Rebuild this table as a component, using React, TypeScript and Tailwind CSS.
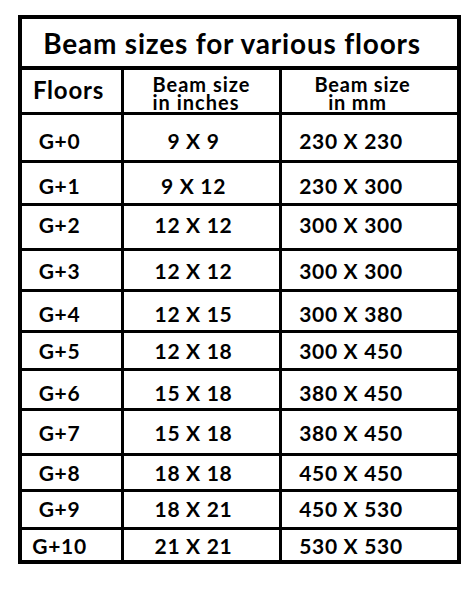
import React from "react";

type Row = {
  floor: string;
  inches: string;
  mm: string;
  h: string;
  nudge: string;
};

// row heights include the 3px bottom rule (border-box)
const rows: Row[] = [
  { floor: "G+0", inches: "9 X 9", mm: "230 X 230", h: "h-[48px]", nudge: "pt-[6px]" },
  { floor: "G+1", inches: "9 X 12", mm: "230 X 300", h: "h-[43px]", nudge: "pt-[5px]" },
  { floor: "G+2", inches: "12 X 12", mm: "300 X 300", h: "h-[45px]", nudge: "pb-[5px]" },
  { floor: "G+3", inches: "12 X 12", mm: "300 X 300", h: "h-[41px]", nudge: "" },
  { floor: "G+4", inches: "12 X 15", mm: "300 X 380", h: "h-[41px]", nudge: "pt-[5px]" },
  { floor: "G+5", inches: "12 X 18", mm: "300 X 450", h: "h-[38px]", nudge: "pb-[1px]" },
  { floor: "G+6", inches: "15 X 18", mm: "380 X 450", h: "h-[40px]", nudge: "pt-[6px]" },
  { floor: "G+7", inches: "15 X 18", mm: "380 X 450", h: "h-[45px]", nudge: "" },
  { floor: "G+8", inches: "18 X 18", mm: "450 X 450", h: "h-[36px]", nudge: "" },
  { floor: "G+9", inches: "18 X 21", mm: "450 X 530", h: "h-[38px]", nudge: "pb-[2px]" },
  { floor: "G+10", inches: "21 X 21", mm: "530 X 530", h: "h-[30px]", nudge: "" },
];

const App: React.FC = () => {
  return (
    <div
      className="min-h-[590px] w-[474px] bg-white pt-[15px] pl-[18px] text-black"
      style={{ fontFamily: "Lato, 'Open Sans', sans-serif" }}
    >
      <div className="w-[443px] border-4 border-black">
        {/* title */}
        <div className="flex h-[51px] items-center justify-center border-b-4 border-black pr-[15px]">
          <h1 className="text-[28px] leading-none font-bold tracking-[0.8px]">
            Beam sizes for various floors
          </h1>
        </div>

        {/* header */}
        <div className="flex h-[45px] border-b-[3px] border-black font-bold">
          <div className="flex w-[102px] items-center justify-center border-r-[3px] border-black pr-[6px] pb-[3px] text-[24px] leading-none tracking-[0.8px]">
            Floors
          </div>
          <div className="flex w-[158px] items-center justify-center border-r-[3px] border-black pt-[3px] text-[20px] leading-[18px] tracking-[1px]">
            <div>
              <div>Beam size</div>
              <div>in inches</div>
            </div>
          </div>
          <div className="flex flex-1 items-center justify-center pr-[14px] pt-[3px] text-center text-[20px] leading-[18px] tracking-[0.8px]">
            <div>
              <div>Beam size</div>
              <div className="pr-[10px]">in mm</div>
            </div>
          </div>
        </div>

        {/* rows */}
        {rows.map((r, i) => (
          <div
            key={r.floor}
            className={`flex ${r.h} text-[21px] leading-none font-bold tracking-[0.7px] ${
              i < rows.length - 1 ? "border-b-[3px] border-black" : ""
            }`}
          >
            <div className={`flex w-[102px] items-center justify-center border-r-[3px] border-black pr-[24px] ${r.nudge}`}>
              {r.floor}
            </div>
            <div className={`flex w-[158px] items-center justify-center border-r-[3px] border-black pr-[16px] ${r.nudge}`}>
              {r.inches}
            </div>
            <div className={`flex flex-1 items-center justify-center pr-[37px] ${r.nudge}`}>{r.mm}</div>
          </div>
        ))}
      </div>
    </div>
  );
};

export default App;
